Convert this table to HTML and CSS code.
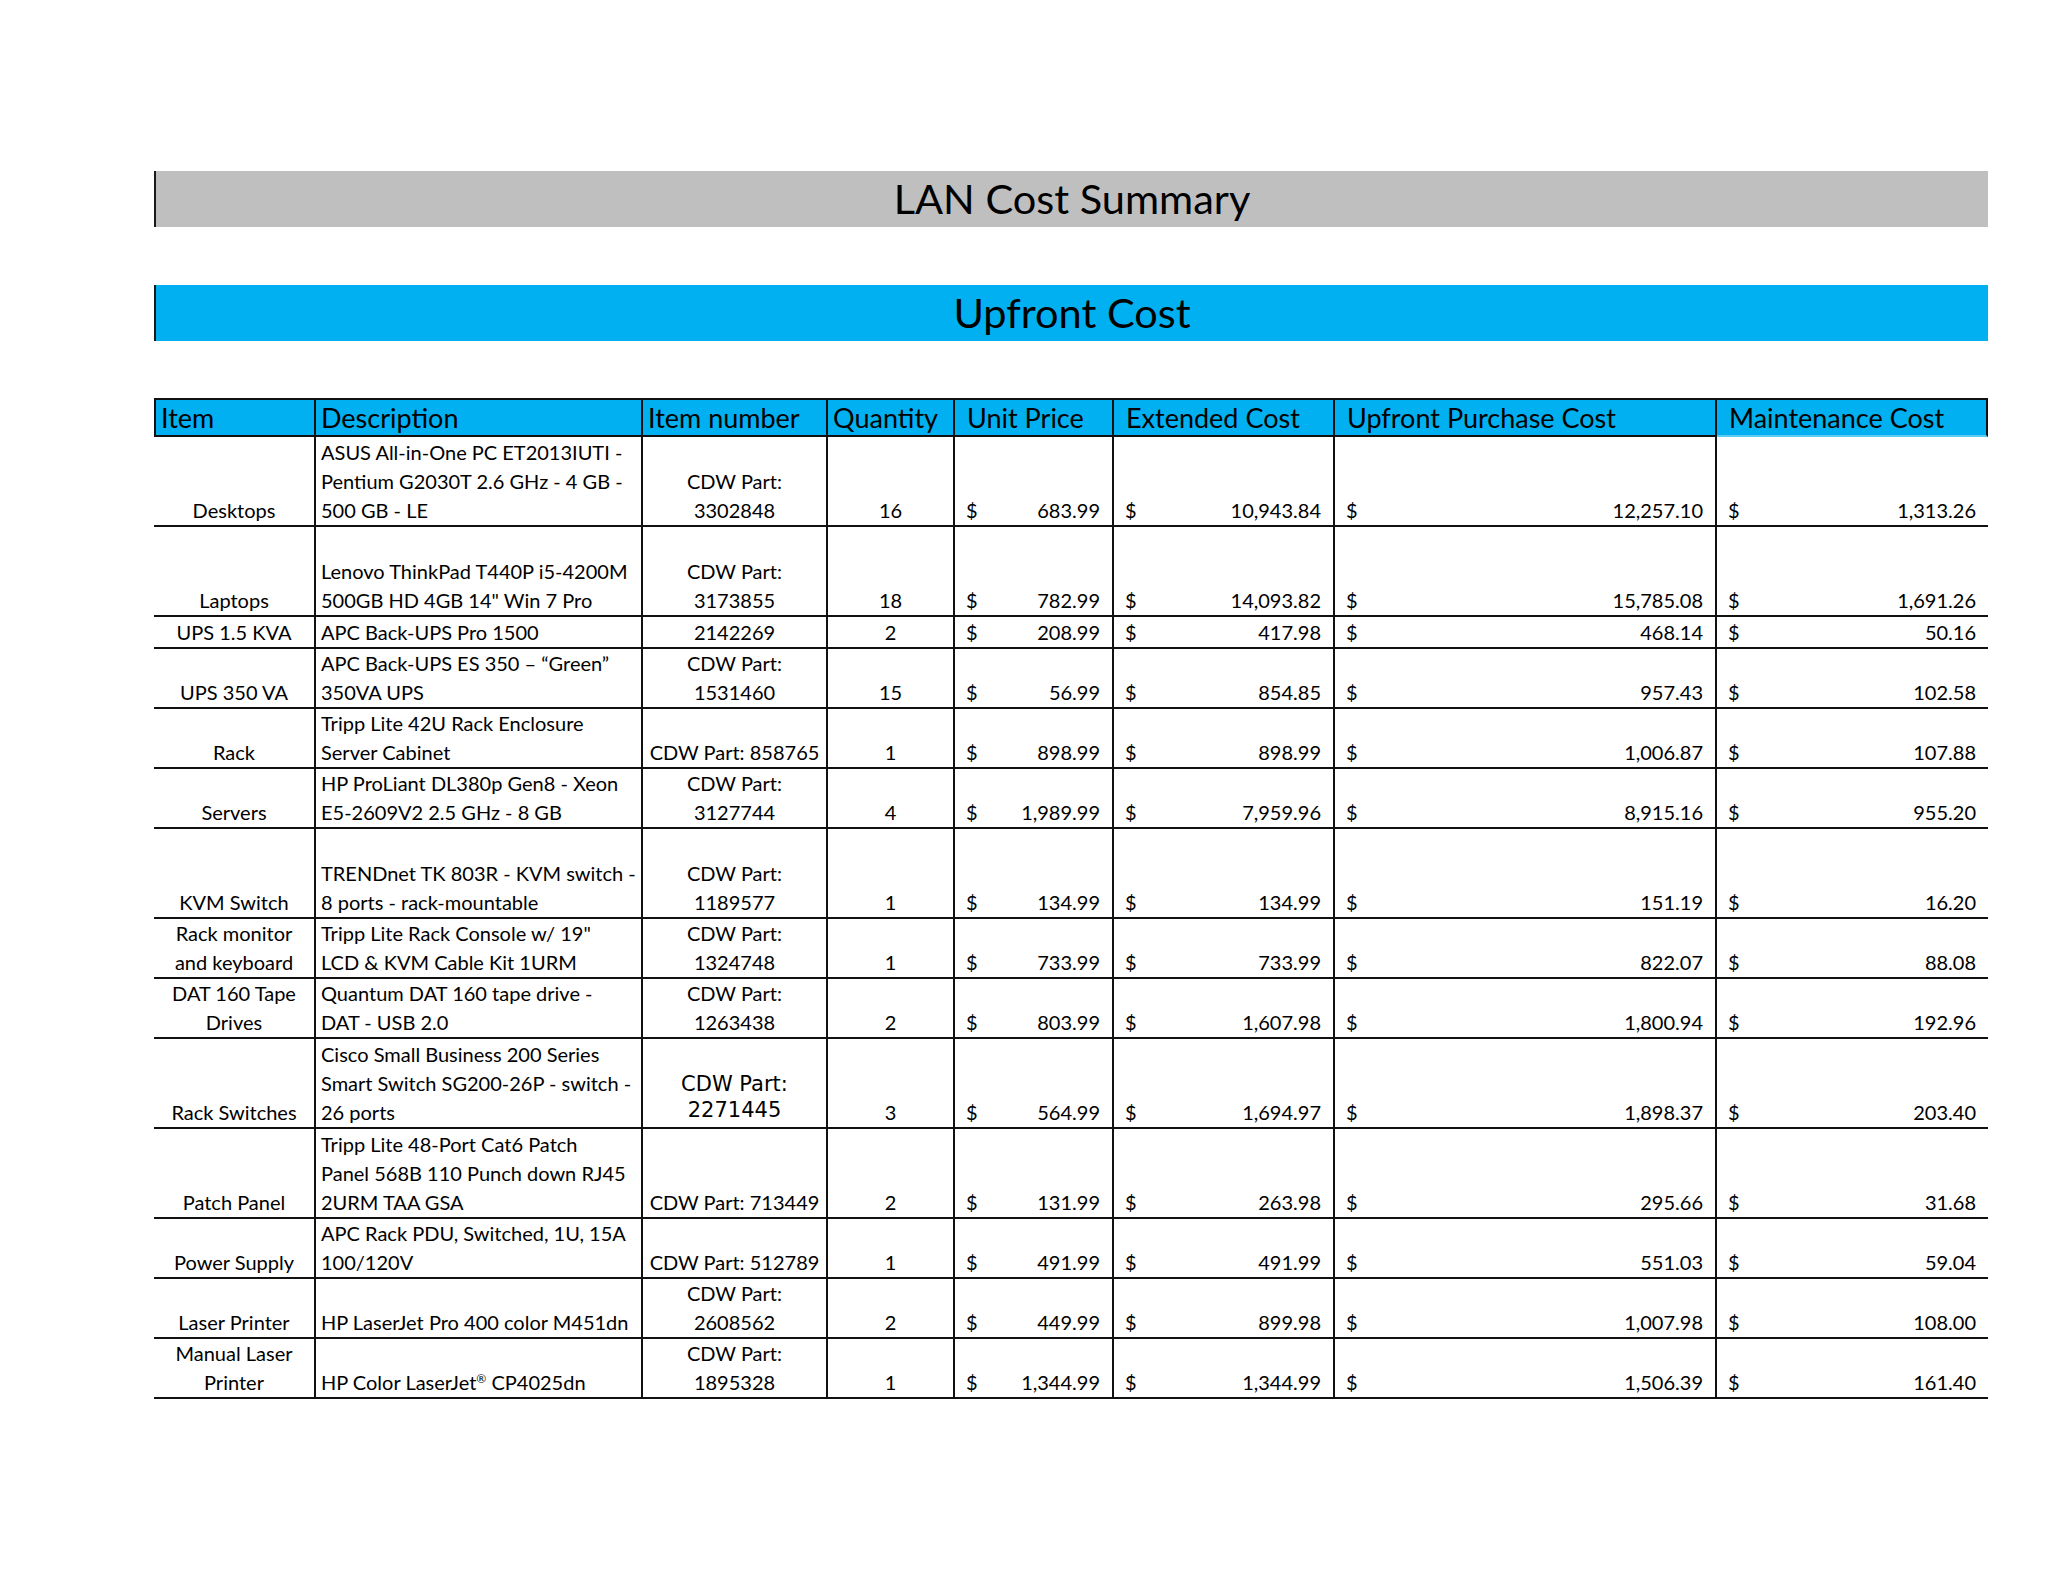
FILE: index.html
```html
<!DOCTYPE html>
<html lang="en">
<head>
<meta charset="utf-8">
<title>LAN Cost Summary</title>
<link rel="stylesheet" href="styles.css">
</head>
<body>
<main class="sheet">
  <div class="banner banner-gray">LAN Cost Summary</div>
  <div class="banner banner-blue">Upfront Cost</div>
  <table class="costs">
    <colgroup>
      <col class="c-item"><col class="c-desc"><col class="c-num"><col class="c-qty">
      <col class="c-unit"><col class="c-ext"><col class="c-up"><col class="c-maint">
    </colgroup>
    <thead>
      <tr>
        <th>Item</th><th>Description</th><th>Item number</th><th>Quantity</th>
        <th class="acc">Unit Price</th><th class="acc">Extended Cost</th><th class="acc">Upfront Purchase Cost</th><th class="acc last">Maintenance Cost</th>
      </tr>
    </thead>
    <tbody>
      <tr class="h3">
        <td class="ctr">Desktops</td>
        <td>ASUS All-in-One PC ET2013IUTI -<br>Pentium G2030T 2.6 GHz - 4 GB -<br>500 GB - LE</td>
        <td class="ctr">CDW Part:<br>3302848</td>
        <td class="ctr">16</td>
        <td><div class="money"><span>$</span><span>683.99</span></div></td>
        <td><div class="money"><span>$</span><span>10,943.84</span></div></td>
        <td><div class="money"><span>$</span><span>12,257.10</span></div></td>
        <td><div class="money"><span>$</span><span>1,313.26</span></div></td>
      </tr>
      <tr class="h3">
        <td class="ctr">Laptops</td>
        <td>Lenovo ThinkPad T440P i5-4200M<br>500GB HD 4GB 14" Win 7 Pro</td>
        <td class="ctr">CDW Part:<br>3173855</td>
        <td class="ctr">18</td>
        <td><div class="money"><span>$</span><span>782.99</span></div></td>
        <td><div class="money"><span>$</span><span>14,093.82</span></div></td>
        <td><div class="money"><span>$</span><span>15,785.08</span></div></td>
        <td><div class="money"><span>$</span><span>1,691.26</span></div></td>
      </tr>
      <tr class="h1">
        <td class="ctr">UPS 1.5 KVA</td>
        <td>APC Back-UPS Pro 1500</td>
        <td class="ctr">2142269</td>
        <td class="ctr">2</td>
        <td><div class="money"><span>$</span><span>208.99</span></div></td>
        <td><div class="money"><span>$</span><span>417.98</span></div></td>
        <td><div class="money"><span>$</span><span>468.14</span></div></td>
        <td><div class="money"><span>$</span><span>50.16</span></div></td>
      </tr>
      <tr class="h2">
        <td class="ctr">UPS 350 VA</td>
        <td>APC Back-UPS ES 350 – “Green”<br>350VA UPS</td>
        <td class="ctr">CDW Part:<br>1531460</td>
        <td class="ctr">15</td>
        <td><div class="money"><span>$</span><span>56.99</span></div></td>
        <td><div class="money"><span>$</span><span>854.85</span></div></td>
        <td><div class="money"><span>$</span><span>957.43</span></div></td>
        <td><div class="money"><span>$</span><span>102.58</span></div></td>
      </tr>
      <tr class="h2">
        <td class="ctr">Rack</td>
        <td>Tripp Lite 42U Rack Enclosure<br>Server Cabinet</td>
        <td class="ctr">CDW Part: 858765</td>
        <td class="ctr">1</td>
        <td><div class="money"><span>$</span><span>898.99</span></div></td>
        <td><div class="money"><span>$</span><span>898.99</span></div></td>
        <td><div class="money"><span>$</span><span>1,006.87</span></div></td>
        <td><div class="money"><span>$</span><span>107.88</span></div></td>
      </tr>
      <tr class="h2">
        <td class="ctr">Servers</td>
        <td>HP ProLiant DL380p Gen8 - Xeon<br>E5-2609V2 2.5 GHz - 8 GB</td>
        <td class="ctr">CDW Part:<br>3127744</td>
        <td class="ctr">4</td>
        <td><div class="money"><span>$</span><span>1,989.99</span></div></td>
        <td><div class="money"><span>$</span><span>7,959.96</span></div></td>
        <td><div class="money"><span>$</span><span>8,915.16</span></div></td>
        <td><div class="money"><span>$</span><span>955.20</span></div></td>
      </tr>
      <tr class="h3">
        <td class="ctr">KVM Switch</td>
        <td>TRENDnet TK 803R - KVM switch -<br>8 ports - rack-mountable</td>
        <td class="ctr">CDW Part:<br>1189577</td>
        <td class="ctr">1</td>
        <td><div class="money"><span>$</span><span>134.99</span></div></td>
        <td><div class="money"><span>$</span><span>134.99</span></div></td>
        <td><div class="money"><span>$</span><span>151.19</span></div></td>
        <td><div class="money"><span>$</span><span>16.20</span></div></td>
      </tr>
      <tr class="h2">
        <td class="ctr">Rack monitor<br>and keyboard</td>
        <td>Tripp Lite Rack Console w/ 19"<br>LCD &amp; KVM Cable Kit 1URM</td>
        <td class="ctr">CDW Part:<br>1324748</td>
        <td class="ctr">1</td>
        <td><div class="money"><span>$</span><span>733.99</span></div></td>
        <td><div class="money"><span>$</span><span>733.99</span></div></td>
        <td><div class="money"><span>$</span><span>822.07</span></div></td>
        <td><div class="money"><span>$</span><span>88.08</span></div></td>
      </tr>
      <tr class="h2">
        <td class="ctr">DAT 160 Tape<br>Drives</td>
        <td>Quantum DAT 160 tape drive -<br>DAT - USB 2.0</td>
        <td class="ctr">CDW Part:<br>1263438</td>
        <td class="ctr">2</td>
        <td><div class="money"><span>$</span><span>803.99</span></div></td>
        <td><div class="money"><span>$</span><span>1,607.98</span></div></td>
        <td><div class="money"><span>$</span><span>1,800.94</span></div></td>
        <td><div class="money"><span>$</span><span>192.96</span></div></td>
      </tr>
      <tr class="h3">
        <td class="ctr">Rack Switches</td>
        <td>Cisco Small Business 200 Series<br>Smart Switch SG200-26P - switch -<br>26 ports</td>
        <td class="ctr alt">CDW Part:<br>2271445</td>
        <td class="ctr">3</td>
        <td><div class="money"><span>$</span><span>564.99</span></div></td>
        <td><div class="money"><span>$</span><span>1,694.97</span></div></td>
        <td><div class="money"><span>$</span><span>1,898.37</span></div></td>
        <td><div class="money"><span>$</span><span>203.40</span></div></td>
      </tr>
      <tr class="h3">
        <td class="ctr">Patch Panel</td>
        <td>Tripp Lite 48-Port Cat6 Patch<br>Panel 568B 110 Punch down RJ45<br>2URM TAA GSA</td>
        <td class="ctr">CDW Part: 713449</td>
        <td class="ctr">2</td>
        <td><div class="money"><span>$</span><span>131.99</span></div></td>
        <td><div class="money"><span>$</span><span>263.98</span></div></td>
        <td><div class="money"><span>$</span><span>295.66</span></div></td>
        <td><div class="money"><span>$</span><span>31.68</span></div></td>
      </tr>
      <tr class="h2">
        <td class="ctr">Power Supply</td>
        <td>APC Rack PDU, Switched, 1U, 15A<br>100/120V</td>
        <td class="ctr">CDW Part: 512789</td>
        <td class="ctr">1</td>
        <td><div class="money"><span>$</span><span>491.99</span></div></td>
        <td><div class="money"><span>$</span><span>491.99</span></div></td>
        <td><div class="money"><span>$</span><span>551.03</span></div></td>
        <td><div class="money"><span>$</span><span>59.04</span></div></td>
      </tr>
      <tr class="h2">
        <td class="ctr">Laser Printer</td>
        <td>HP LaserJet Pro 400 color M451dn</td>
        <td class="ctr">CDW Part:<br>2608562</td>
        <td class="ctr">2</td>
        <td><div class="money"><span>$</span><span>449.99</span></div></td>
        <td><div class="money"><span>$</span><span>899.98</span></div></td>
        <td><div class="money"><span>$</span><span>1,007.98</span></div></td>
        <td><div class="money"><span>$</span><span>108.00</span></div></td>
      </tr>
      <tr class="h2">
        <td class="ctr">Manual Laser<br>Printer</td>
        <td>HP Color LaserJet<span class="reg">®</span> CP4025dn</td>
        <td class="ctr">CDW Part:<br>1895328</td>
        <td class="ctr">1</td>
        <td><div class="money"><span>$</span><span>1,344.99</span></div></td>
        <td><div class="money"><span>$</span><span>1,344.99</span></div></td>
        <td><div class="money"><span>$</span><span>1,506.39</span></div></td>
        <td><div class="money"><span>$</span><span>161.40</span></div></td>
      </tr>
    </tbody>
  </table>
</main>
</body>
</html>
```
FILE: styles.css
```css
html, body {
  margin: 0;
  padding: 0;
  background: #ffffff;
}

body {
  font-family: Lato, "Open Sans", "Liberation Sans", sans-serif;
  color: #000000;
}

.sheet {
  width: 1834px;
  padding: 171px 0 0 154px;
  display: flex;
  flex-direction: column;
}

.banner {
  height: 56px;
  box-sizing: border-box;
  border-left: 2px solid #1a1a1a;
  display: flex;
  align-items: center;
  justify-content: center;
  font-size: 41.5px;
  line-height: 1;
}

.banner-gray {
  background: #bfbfbf;
}

.banner-blue {
  background: #00b0f0;
  margin-top: 58px;
}

.costs {
  margin-top: 57px;
  width: 1834px;
  table-layout: fixed;
  border-collapse: separate;
  border-spacing: 0;
  font-size: 20px;
}

.c-item { width: 162px; }
.c-desc { width: 327px; }
.c-num { width: 185px; }
.c-qty { width: 127px; }
.c-unit { width: 159px; }
.c-ext { width: 221px; }
.c-up { width: 382px; }
.c-maint { width: 271px; }

.costs th {
  box-sizing: border-box;
  height: 39px;
  background: #00b0f0;
  font-weight: normal;
  font-size: 27px;
  text-align: left;
  vertical-align: bottom;
  line-height: 32px;
  padding: 0 4px 1px 5px;
  border-top: 2px solid #111;
  border-bottom: 2px solid #111;
  border-right: 2px solid #111;
  white-space: nowrap;
}

.costs th:first-child {
  border-left: 2px solid #111;
}

.costs th.acc {
  padding-left: 12px;
}

.costs th.last {
  border-bottom-color: #5ccbf3;
}

.costs td {
  box-sizing: border-box;
  vertical-align: bottom;
  line-height: 29px;
  padding: 0 5px 0 5px;
  border-bottom: 2px solid #111;
  border-right: 2px solid #111;
  white-space: nowrap;
}

.costs td:last-child {
  border-right: none;
}

.h1 td { height: 32px; }
.h2 td { height: 60px; }
.h3 td { height: 90px; }

.costs td.ctr {
  text-align: center;
}

.costs td.alt {
  font-family: "DejaVu Sans", Verdana, sans-serif;
  font-size: 21px;
  line-height: 26px;
  padding-bottom: 4px;
}

.money {
  display: flex;
  justify-content: space-between;
  padding: 0 7px 0 6px;
}

.reg {
  font-size: 12px;
  vertical-align: 7px;
  line-height: 0;
}
```
